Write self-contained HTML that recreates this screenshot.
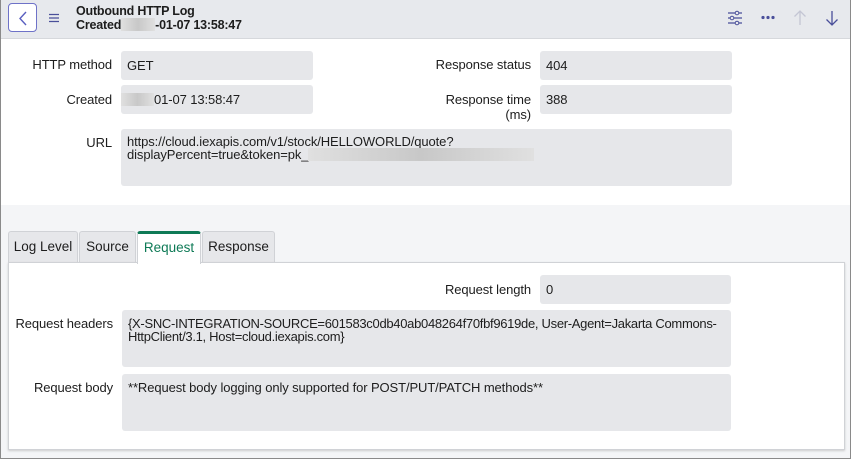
<!DOCTYPE html>
<html><head><meta charset="utf-8"><style>
*{box-sizing:border-box;margin:0;padding:0}
body{width:851px;height:459px;overflow:hidden;font-family:"Liberation Sans",sans-serif;color:#1d1d1d;background:#fff;position:relative}
.frame{position:absolute;left:0;top:0;width:851px;height:459px;border:1px solid #8a8a8a;border-top:none}
.hdr{position:absolute;left:1px;top:0;width:849px;height:39px;background:#e7e9ed;border-bottom:1px solid #d6d8dc}
.back{position:absolute;left:7px;top:3px;width:29px;height:29px;border:1px solid #6e72c8;border-radius:4px;background:#fff}
.title{position:absolute;left:75px;top:4px;font-weight:bold;font-size:12.5px;line-height:14px;letter-spacing:-0.2px}
.blur{display:inline-block;background:linear-gradient(90deg,#e0e0e0,#c8c8c8,#e0e0e0);height:13px;vertical-align:-2px}
.lbl{position:absolute;font-size:13px;text-align:right;letter-spacing:-0.1px}
.fld{position:absolute;background:#e6e7ea;border-radius:3px;font-size:13px;padding:7px 6px;letter-spacing:-0.1px}
.gray{position:absolute;left:1px;top:205px;width:849px;height:253px;background:#f4f5f7}
.tab{position:absolute;top:231px;height:32px;background:#e6e7ea;border:1px solid #d0d2d6;border-bottom:none;border-radius:3px 3px 0 0;font-size:13.5px;text-align:center;line-height:30px}
.panel{position:absolute;left:8px;top:262px;width:837px;height:188px;background:#fff;border:1px solid #d0d2d6;box-shadow:0 1px 2px #ccc}
</style></head><body>
<div class="hdr">
<div class="back"><svg width="29" height="29" viewBox="0 0 29 29"><path d="M17 8 L11 14.5 L17 21" fill="none" stroke="#5a5fc0" stroke-width="1.4"/></svg></div>
<svg style="position:absolute;left:47px;top:13px" width="12" height="10"><path d="M1 1.5H11M1 5H11M1 8.5H11" stroke="#4a4f9a" stroke-width="1.3"/></svg>
<div class="title">Outbound HTTP Log<br>Created<span class="blur" style="width:34px"></span>-01-07 13:58:47</div>
<svg style="position:absolute;left:726px;top:10px" width="16" height="16"><path d="M1 3H15M1 8H15M1 13H15" stroke="#4a4f9a" stroke-width="1.2"/><circle cx="10" cy="3" r="1.8" fill="#e7e9ed" stroke="#4a4f9a"/><circle cx="5" cy="8" r="1.8" fill="#e7e9ed" stroke="#4a4f9a"/><circle cx="10" cy="13" r="1.8" fill="#e7e9ed" stroke="#4a4f9a"/></svg>
<svg style="position:absolute;left:760px;top:15px" width="14" height="5"><circle cx="2" cy="2.5" r="1.6" fill="#4a4f9a"/><circle cx="7" cy="2.5" r="1.6" fill="#4a4f9a"/><circle cx="12" cy="2.5" r="1.6" fill="#4a4f9a"/></svg>
<svg style="position:absolute;left:792px;top:10px" width="14" height="16"><path d="M7 15V1M1.5 6.5L7 1L12.5 6.5" fill="none" stroke="#c4c6d4" stroke-width="1.3"/></svg>
<svg style="position:absolute;left:824px;top:10px" width="14" height="16"><path d="M7 1V15M1.5 9.5L7 15L12.5 9.5" fill="none" stroke="#4a4f9a" stroke-width="1.3"/></svg>
</div>
<div class="lbl" style="right:739px;top:57px">HTTP method</div>
<div class="fld" style="left:121px;top:51px;width:192px;height:29px">GET</div>
<div class="lbl" style="right:739px;top:92px">Created</div>
<div class="fld" style="left:121px;top:85px;width:192px;height:29px"><span class="blur" style="width:33px;margin-left:-6px"></span>01-07 13:58:47</div>
<div class="lbl" style="right:320px;top:57px">Response status</div>
<div class="fld" style="left:540px;top:51px;width:192px;height:29px">404</div>
<div class="lbl" style="right:320px;top:92px;line-height:15px">Response time<br>(ms)</div>
<div class="fld" style="left:540px;top:85px;width:192px;height:29px">388</div>
<div class="lbl" style="right:739px;top:135px">URL</div>
<div class="fld" style="left:121px;top:129px;width:611px;height:57px;line-height:13px;padding-top:6px">https://cloud.iexapis.com/v1/stock/HELLOWORLD/quote?<br>displayPercent=true&amp;token=pk_<span class="blur" style="width:226px"></span></div>
<div class="gray"></div>
<div class="tab" style="left:8px;width:70px">Log Level</div>
<div class="tab" style="left:79px;width:57px">Source</div>
<div class="tab" style="left:202px;width:73px">Response</div>
<div class="panel"></div>
<div class="tab" style="left:137px;width:64px;background:#fff;border-top:3px solid #0e7a56;color:#0e7a56;height:33px;line-height:27px;z-index:2">Request</div>
<div class="lbl" style="right:320px;top:282px">Request length</div>
<div class="fld" style="left:540px;top:275px;width:191px;height:29px">0</div>
<div class="lbl" style="right:738px;top:316px">Request headers</div>
<div class="fld" style="left:122px;top:310px;width:609px;height:57px;line-height:13px;letter-spacing:-0.3px;white-space:nowrap">{X-SNC-INTEGRATION-SOURCE=601583c0db40ab048264f70fbf9619de, User-Agent=Jakarta Commons-<br>HttpClient/3.1, Host=cloud.iexapis.com}</div>
<div class="lbl" style="right:738px;top:380px">Request body</div>
<div class="fld" style="left:122px;top:374px;width:609px;height:57px;line-height:13px">**Request body logging only supported for POST/PUT/PATCH methods**</div>
<div class="frame"></div>
</body></html>
